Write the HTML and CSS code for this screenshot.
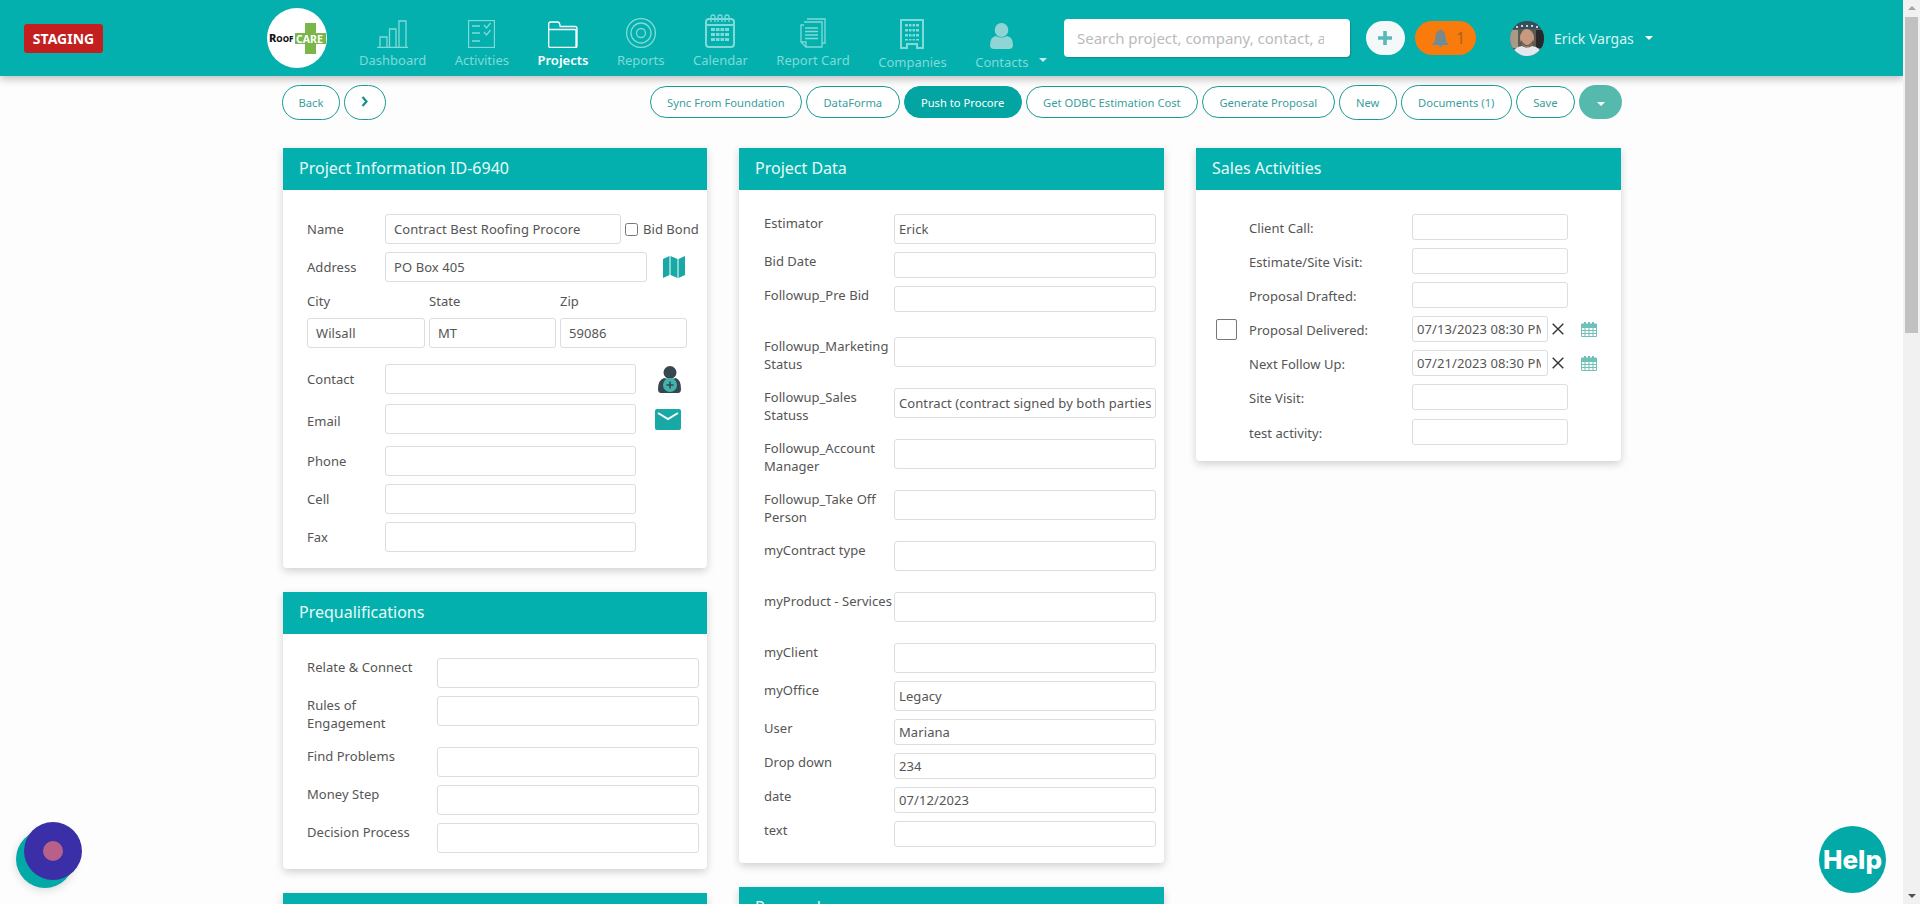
FILE: index.html
```html
<!DOCTYPE html>
<html lang="en">
<head>
    <meta charset="UTF-8">
    <title>Project Information</title>
    <link rel="stylesheet" href="styles.css">
</head>
<body>
<div class="app">
    <div class="page">
        <header class="topbar">
            <span class="staging">STAGING</span>
            <a class="logo">
                <svg width="60" height="60" viewBox="0 0 60 60">
                    <circle cx="30" cy="30" r="30" fill="#fff"/>
                    <path d="M38 15h11v10h10v11H49v10H38V36H28V25h10z" fill="#7ab648"/>
                    <text x="2" y="34" class="logo_roof">R<tspan class="logo_oof">OOF</tspan></text>
                    <text x="29" y="34.500" class="logo_care">CARE</text>
                </svg>
            </a>
            <nav class="nav">
                <a class="nav_item">
                    <svg width="31" height="28" viewBox="0 0 31 28" class="nav_stroke">
                        <path d="M3 27V17h7v10M12.500 27V9h6.500v18M22 27V1h7v26M0 27.500h31"/>
                    </svg>
                    <span>Dashboard</span>
                </a>
                <a class="nav_item">
                    <svg width="27" height="28" viewBox="0 0 27 28" class="nav_stroke">
                        <rect x=".5" y=".5" width="26" height="27"/>
                        <path d="M4 6h8M4 13h8M4 21h8M16 5l2.500 3 4-5M16 12l2.500 3 4-5"/>
                    </svg>
                    <span>Activities</span>
                </a>
                <a class="nav_item nav_active">
                    <svg width="30" height="27" viewBox="0 0 30 27" class="nav_stroke">
                        <path d="M.7 25V3q0-2 2-2h7q1.500 0 2 2l.5 2.500H27q2 0 2 2V25q0 1.500-1.500 1.500H2.500Q.7 26.500.7 25zM.7 8.500h26.300q1 0 1 1V26"/>
                    </svg>
                    <span>Projects</span>
                </a>
                <a class="nav_item">
                    <svg width="30" height="30" viewBox="0 0 30 30" class="nav_stroke">
                        <circle cx="15" cy="15" r="14.400"/>
                        <circle cx="15" cy="15" r="10"/>
                        <circle cx="15" cy="15" r="4.500"/>
                    </svg>
                    <span>Reports</span>
                </a>
                <a class="nav_item">
                    <svg width="30" height="34" viewBox="0 0 30 34">
                        <rect x="1" y="5" width="28" height="28" rx="3" fill="none" stroke="#7fdad8" stroke-width="2"/>
                        <path d="M1 11h28" stroke="#7fdad8" stroke-width="2"/>
                        <path d="M6 8V3q0-2 2-2t2 2v5M13 8V3q0-2 2-2t2 2v5M20 8V3q0-2 2-2t2 2v5" fill="none" stroke="#7fdad8" stroke-width="1.300"/>
                        <path d="M6 14h18v3H6zM6 19h18v3H6zM6 24h18v3H6z" fill="#7fdad8"/>
                        <path d="M10.500 14v13M15 14v13M19.500 14v13" stroke="#03b0ae"/>
                    </svg>
                    <span>Calendar</span>
                </a>
                <a class="nav_item">
                    <svg width="26" height="30" viewBox="0 0 26 30" class="nav_stroke">
                        <path d="M7 1h18v24h-3"/>
                        <path d="M4 4h18v25H6l-5-5V7h3"/>
                        <path d="M1 24h5v5M5 10h13M5 13.500h13M5 17h13M5 20.500h13"/>
                    </svg>
                    <span>Report Card</span>
                </a>
                <a class="nav_item nav_low">
                    <svg width="24" height="30" viewBox="0 0 24 30">
                        <path fill-rule="evenodd" fill="#7fdad8" d="M0 0h24v30H16v-4H8v4H0zM2 2v26h4v-4h12v4h4V2z"/>
                        <path d="M5 5h14v2.500H5zM5 10h14v2.500H5zM5 15h14v2.500H5zM5 20h14v1.500H5z" fill="#7fdad8"/>
                        <path d="M8.500 5v17M12 5v17M15.500 5v17" stroke="#03b0ae"/>
                    </svg>
                    <span>Companies</span>
                </a>
                <a class="nav_item nav_low">
                    <svg width="23" height="26" viewBox="0 0 23 26" fill="#8fd5d6">
                        <ellipse cx="11.500" cy="7" rx="6.800" ry="7"/>
                        <path d="M0 22q0-8 6-9 5.500 3 11 0 6 1 6 9 0 4-4 4H4q-4 0-4-4z"/>
                    </svg>
                    <span>Contacts</span>
                </a>
                <span class="caret nav_caret"></span>
            </nav>
            <input class="search" type="text" placeholder="Search project, company, contact, address">
            <button class="add_button">
                <svg width="14" height="14" viewBox="0 0 14 14"><path d="M5.200 0h3.600v5.200H14v3.600H8.800V14H5.200V8.800H0V5.200h5.200z" fill="#5ab8b6"/></svg>
            </button>
            <button class="bell_button">
                <svg width="17" height="18" viewBox="0 0 17 18">
                    <defs>
                        <linearGradient id="bell_fill" x1="0" y1="0" x2="0" y2="1">
                            <stop offset="0" stop-color="#8c8476"/>
                            <stop offset="1" stop-color="#5f8fa8"/>
                        </linearGradient>
                    </defs>
                    <path d="M8.500 0q1.500 0 1.500 1.500 3 1 3.500 5l.5 5q.3 2 2.500 3.500v1H.5v-1Q2.700 13.500 3 11.500l.5-5q.5-4 3.500-5Q7 0 8.500 0zM6.500 16.500h4q-.5 1.500-2 1.500t-2-1.500z" fill="url(#bell_fill)"/>
                </svg>
                <span>1</span>
            </button>
            <svg class="avatar" width="34" height="35" viewBox="0 0 34 35">
                <defs><clipPath id="avatar_clip"><ellipse cx="17" cy="17.500" rx="17" ry="17.500"/></clipPath></defs>
                <g clip-path="url(#avatar_clip)">
                    <rect width="34" height="35" fill="#5b5a52"/>
                    <rect width="34" height="8" fill="#35505c"/>
                    <path d="M6 5h2v2H6zM11 4h2v2h-2zM16 4h2v2h-2zM21 4h2v2h-2zM26 5h2v2h-2z" fill="#c9d4d8"/>
                    <rect x="0" y="9" width="8" height="18" fill="#a89a86"/>
                    <rect x="26" y="9" width="8" height="18" fill="#26282b"/>
                    <ellipse cx="17" cy="17" rx="7" ry="9" fill="#c79a7f"/>
                    <path d="M11 19q6 10 12 0v3q-6 7-12 0z" fill="#6f5a4b"/>
                    <path d="M2 35q1-9 10-10 5 3 10 0 9 1 10 10z" fill="#e4e8ee"/>
                </g>
            </svg>
            <span class="user_name">Erick Vargas</span>
            <span class="caret user_caret"></span>
        </header>

        <div class="toolbar">
            <div class="toolbar_group">
                <button class="pill pill_tall pill_back">Back</button>
                <button class="pill pill_tall pill_next">
                    <svg width="8" height="11" viewBox="0 0 8 11"><path d="M1.500 1l4 4.500-4 4.500" fill="none" stroke="#168f8d" stroke-width="2.200"/></svg>
                </button>
            </div>
            <div class="toolbar_group">
                <button class="pill">Sync From Foundation</button>
                <button class="pill">DataForma</button>
                <button class="pill pill_solid">Push to Procore</button>
                <button class="pill">Get ODBC Estimation Cost</button>
                <button class="pill">Generate Proposal</button>
                <button class="pill pill_tall">New</button>
                <button class="pill pill_tall">Documents (1)</button>
                <button class="pill">Save</button>
                <button class="pill pill_more"><span class="caret"></span></button>
            </div>
        </div>

        <main class="columns">
            <div class="column">
                <section class="card">
                    <h2 class="card_title">Project Information ID-6940</h2>
                    <div class="card_body">
                        <div class="row row_center mb8">
                            <label class="label w78">Name</label>
                            <input class="field w236" type="text" value="Contract Best Roofing Procore">
                            <input class="bid_check" type="checkbox">
                            <span class="label bid_label">Bid Bond</span>
                        </div>
                        <div class="row row_center mb10">
                            <label class="label w78">Address</label>
                            <input class="field w262" type="text" value="PO Box 405">
                            <svg class="map_icon" width="22" height="22" viewBox="0 0 22 22"><path d="M0 3l6.500-3v19L0 22zM7.500 0l7 3v19l-7-3zM15.500 3L22 0v19l-6.500 3z" fill="#18a8a5"/></svg>
                        </div>
                        <div class="city_grid">
                            <span class="label">City</span><span class="label">State</span><span class="label">Zip</span>
                            <input class="field" type="text" value="Wilsall">
                            <input class="field" type="text" value="MT">
                            <input class="field" type="text" value="59086">
                        </div>
                        <div class="row row_center mb10">
                            <label class="label w78">Contact</label>
                            <input class="field w251" type="text">
                            <svg class="person_icon" width="23" height="27" viewBox="0 0 23 27">
                                <circle cx="12" cy="6.500" r="6.500" fill="#37474f"/>
                                <path d="M0 23q0-9 6-11 6 2 12 0 5 2 5 11 0 4-3 4H3q-3 0-3-4z" fill="#37474f"/>
                                <circle cx="12" cy="19" r="7" fill="#3fb3ad"/>
                                <path d="M12 15.500v7M8.500 19h7" stroke="#37474f" stroke-width="1.500"/>
                            </svg>
                        </div>
                        <div class="row row_center mb12">
                            <label class="label w78 nudge2">Email</label>
                            <input class="field w251" type="text">
                            <svg class="mail_icon" width="26" height="21" viewBox="0 0 26 21">
                                <rect width="26" height="21" rx="2" fill="#18a8a5"/>
                                <path d="M3 4l10 6 10-6" fill="none" stroke="#fff" stroke-width="2"/>
                            </svg>
                        </div>
                        <div class="row row_center mb8">
                            <label class="label w78">Phone</label>
                            <input class="field w251" type="text">
                        </div>
                        <div class="row row_center mb8">
                            <label class="label w78">Cell</label>
                            <input class="field w251" type="text">
                        </div>
                        <div class="row row_center">
                            <label class="label w78">Fax</label>
                            <input class="field w251" type="text">
                        </div>
                    </div>
                </section>

                <section class="card">
                    <h2 class="card_title">Prequalifications</h2>
                    <div class="card_body">
                        <div class="row mb8">
                            <label class="label w130">Relate &amp; Connect</label>
                            <input class="field w262" type="text">
                        </div>
                        <div class="row row_two mb15">
                            <label class="label w130">Rules of Engagement</label>
                            <input class="field w262" type="text">
                        </div>
                        <div class="row mb8">
                            <label class="label w130">Find Problems</label>
                            <input class="field w262" type="text">
                        </div>
                        <div class="row mb8">
                            <label class="label w130">Money Step</label>
                            <input class="field w262" type="text">
                        </div>
                        <div class="row">
                            <label class="label w130">Decision Process</label>
                            <input class="field w262" type="text">
                        </div>
                    </div>
                </section>

                <section class="card">
                    <h2 class="card_title">&nbsp;</h2>
                </section>
            </div>

            <div class="column">
                <section class="card">
                    <h2 class="card_title">Project Data</h2>
                    <div class="card_body data_body">
                        <div class="row mb8">
                            <label class="label w130">Estimator</label>
                            <input class="field field_tight w262" type="text" value="Erick">
                        </div>
                        <div class="row mb8">
                            <label class="label w130">Bid Date</label>
                            <input class="field field_short field_tight w262" type="text">
                        </div>
                        <div class="row mb25">
                            <label class="label w130">Followup_Pre Bid</label>
                            <input class="field field_short field_tight w262" type="text">
                        </div>
                        <div class="row row_two mb15">
                            <label class="label w130">Followup_Marketing Status</label>
                            <input class="field field_tight w262" type="text">
                        </div>
                        <div class="row row_two mb15">
                            <label class="label w130">Followup_Sales Statuss</label>
                            <input class="field field_tight w262" type="text" value="Contract (contract signed by both parties)">
                        </div>
                        <div class="row row_two mb15">
                            <label class="label w130">Followup_Account Manager</label>
                            <input class="field field_tight w262" type="text">
                        </div>
                        <div class="row row_two mb15">
                            <label class="label w130">Followup_Take Off Person</label>
                            <input class="field field_tight w262" type="text">
                        </div>
                        <div class="row mb21">
                            <label class="label w130">myContract type</label>
                            <input class="field field_tight w262" type="text">
                        </div>
                        <div class="row mb21">
                            <label class="label w130">myProduct - Services</label>
                            <input class="field field_tight w262" type="text">
                        </div>
                        <div class="row mb8">
                            <label class="label w130">myClient</label>
                            <input class="field field_tight w262" type="text">
                        </div>
                        <div class="row mb8">
                            <label class="label w130">myOffice</label>
                            <input class="field field_tight w262" type="text" value="Legacy">
                        </div>
                        <div class="row mb8">
                            <label class="label w130">User</label>
                            <input class="field field_short field_tight w262" type="text" value="Mariana">
                        </div>
                        <div class="row mb8">
                            <label class="label w130">Drop down</label>
                            <input class="field field_short field_tight w262" type="text" value="234">
                        </div>
                        <div class="row mb8">
                            <label class="label w130">date</label>
                            <input class="field field_short field_tight w262" type="text" value="07/12/2023">
                        </div>
                        <div class="row">
                            <label class="label w130">text</label>
                            <input class="field field_short field_tight w262" type="text">
                        </div>
                    </div>
                </section>

                <section class="card">
                    <h2 class="card_title">Proposal</h2>
                </section>
            </div>

            <div class="column">
                <section class="card">
                    <h2 class="card_title">Sales Activities</h2>
                    <div class="card_body sales_body">
                        <div class="row row_center sales_row">
                            <label class="label sales_label">Client Call:</label>
                            <input class="field field_short w156" type="text">
                        </div>
                        <div class="row row_center sales_row">
                            <label class="label sales_label">Estimate/Site Visit:</label>
                            <input class="field field_short w156" type="text">
                        </div>
                        <div class="row row_center sales_row">
                            <label class="label sales_label">Proposal Drafted:</label>
                            <input class="field field_short w156" type="text">
                        </div>
                        <div class="row row_center sales_row">
                            <span class="sales_check"></span>
                            <label class="label sales_label">Proposal Delivered:</label>
                            <input class="field field_short field_date" type="text" value="07/13/2023 08:30 PM">
                            <svg class="clear_icon" width="12" height="12" viewBox="0 0 12 12"><path d="M.7.7l10.600 10.600M11.300.7L.7 11.300" stroke="#333" stroke-width="1.400"/></svg>
                            <svg class="date_icon" width="16" height="16" viewBox="0 0 16 16">
                                <path d="M.5 3h15v12.500H.5zM.5 6.500h15M.5 9.500h15M.5 12.500h15M4 6.500v9M8 6.500v9M12 6.500v9" fill="none" stroke="#6fc0b8"/>
                                <path d="M3 1h2v3H3zM7 1h2v3H7zM11 1h2v3h-2zM.5 3h15v3.500H.5z" fill="#6fc0b8"/>
                            </svg>
                        </div>
                        <div class="row row_center sales_row">
                            <label class="label sales_label">Next Follow Up:</label>
                            <input class="field field_short field_date" type="text" value="07/21/2023 08:30 PM">
                            <svg class="clear_icon" width="12" height="12" viewBox="0 0 12 12"><path d="M.7.7l10.600 10.600M11.300.7L.7 11.300" stroke="#333" stroke-width="1.400"/></svg>
                            <svg class="date_icon" width="16" height="16" viewBox="0 0 16 16">
                                <path d="M.5 3h15v12.500H.5zM.5 6.500h15M.5 9.500h15M.5 12.500h15M4 6.500v9M8 6.500v9M12 6.500v9" fill="none" stroke="#6fc0b8"/>
                                <path d="M3 1h2v3H3zM7 1h2v3H7zM11 1h2v3h-2zM.5 3h15v3.500H.5z" fill="#6fc0b8"/>
                            </svg>
                        </div>
                        <div class="row row_center sales_row sales_row_wide">
                            <label class="label sales_label">Site Visit:</label>
                            <input class="field field_short w156" type="text">
                        </div>
                        <div class="row row_center">
                            <label class="label sales_label">test activity:</label>
                            <input class="field field_short w156" type="text">
                        </div>
                    </div>
                </section>
            </div>
        </main>
    </div>

    <div class="scrollbar">
        <span class="scroll_up"></span>
        <span class="scroll_thumb"></span>
        <span class="scroll_down"></span>
    </div>
</div>

<div class="chat_bubble"><span class="chat_front"><span class="chat_dot"></span></span></div>
<a class="help_button">Help</a>
</body>
</html>
```

FILE: styles.css
```css
* {
    padding: 0;
    margin: 0;
    box-sizing: border-box;
}

html, body {
    height: 100%;
    overflow: hidden;
}

body {
    background-color: #fdfdfd;
    color: #555;
    font-family: "Noto Sans", "Open Sans", sans-serif;
    font-size: 13px;
}

input, button {
    font-family: inherit;
}

.app {
    display: flex;
    height: 904px;
}

.page {
    flex: 1;
    min-width: 0;
    overflow: hidden;
}

/* top bar */
.topbar {
    position: relative;
    z-index: 2;
    display: flex;
    align-items: center;
    height: 76px;
    padding-left: 24px;
    background-color: #03b0ae;
    box-shadow: 0 3px 8px rgba(0, 0, 0, .25);
}

.staging {
    width: 79px;
    height: 29px;
    margin-right: 164px;
    border-radius: 3px;
    background-color: #c41f1f;
    color: #fff;
    font-size: 14px;
    font-weight: 700;
    line-height: 29px;
    text-align: center;
}

.logo {
    width: 60px;
    height: 60px;
    margin-right: 32px;
}

.logo svg {
    display: block;
}

.logo_roof {
    fill: #111;
    font-size: 11px;
    font-weight: 800;
}

.logo_oof {
    font-size: 8px;
}

.logo_care {
    fill: #fff;
    font-size: 10.500px;
    font-weight: 700;
}

.nav {
    display: flex;
    gap: 28.500px;
    height: 76px;
}

.nav_item {
    display: flex;
    flex-direction: column;
    align-items: center;
    justify-content: flex-end;
    padding-bottom: 6px;
    color: #7fdad8;
    font-size: 13px;
    line-height: 19px;
}

.nav_item svg {
    margin-bottom: 3px;
}

.nav_stroke {
    fill: none;
    stroke: #7fdad8;
    stroke-width: 1.300;
}

.nav_active {
    color: #fff;
    font-weight: 600;
}

.nav_active .nav_stroke {
    stroke: #fff;
}

.nav_low {
    padding-bottom: 4px;
}

.nav_low svg {
    margin-bottom: 4px;
}

.caret {
    display: inline-block;
    width: 0;
    height: 0;
    border-top: 4px solid #fff;
    border-left: 4px solid transparent;
    border-right: 4px solid transparent;
}

.nav_caret {
    align-self: flex-end;
    margin: 0 0 14px -18px;
    border-top-color: #c6eeee;
}

.search {
    width: 286px;
    height: 38px;
    margin-left: 17px;
    padding: 0 26px 0 13px;
    border: 0;
    border-radius: 4px;
    background-color: #fff;
    box-shadow: 1px 1px 1px rgba(60, 70, 80, .35);
    font-size: 15px;
}

.search::placeholder {
    color: #bbb;
    opacity: 1;
}

.add_button {
    display: flex;
    align-items: center;
    justify-content: center;
    width: 39px;
    height: 34px;
    margin-left: 16px;
    border: 0;
    border-radius: 17px;
    background-color: #f4f8f9;
}

.bell_button {
    display: flex;
    align-items: center;
    width: 61px;
    height: 34px;
    margin-left: 10px;
    padding-left: 17px;
    border: 0;
    border-radius: 17px;
    background-color: #f97b0c;
    color: #a5651f;
    font-size: 16px;
}

.bell_button span {
    margin-left: 7px;
}

.avatar {
    margin-left: 34px;
}

.user_name {
    margin-left: 10px;
    color: #d8f5f4;
    font-size: 14px;
}

.user_caret {
    margin-left: 11px;
}

/* action buttons */
.toolbar {
    display: flex;
    justify-content: space-between;
    align-items: center;
    width: 1340px;
    height: 36px;
    margin: 8px 0 0 282px;
}

.toolbar_group {
    display: flex;
    align-items: center;
    gap: 4px;
}

.pill {
    height: 32px;
    padding: 0 16.400px;
    border: 1px solid #1a9997;
    border-radius: 18px;
    background-color: #fff;
    color: #3a9e9c;
    font-size: 11.200px;
    white-space: nowrap;
}

.pill_tall {
    height: 35px;
}

.pill_back {
    width: 58px;
    padding: 0;
}

.pill_next {
    width: 42px;
    padding: 0;
}

.pill_solid {
    border-color: #03a5a3;
    background-color: #03a5a3;
    color: #fff;
}

.pill_more {
    width: 43px;
    height: 34px;
    padding: 0 0 2px;
    border: 0;
    background-color: #55b9ad;
}

/* cards */
.columns {
    display: grid;
    grid-template-columns: 424px 425px 425px;
    gap: 32px;
    margin: 28px 0 0 283px;
}

.column {
    display: flex;
    flex-direction: column;
    gap: 24px;
}

.card {
    border-radius: 0 0 4px 4px;
    background-color: #fff;
    box-shadow: 0 3px 9px rgba(0, 0, 0, .18);
}

.card_title {
    height: 42px;
    padding-left: 16px;
    background-color: #03b0ae;
    color: #e8fbfa;
    font-size: 16px;
    font-weight: 400;
    line-height: 41px;
}

.card_body {
    padding: 24px 0 16px 24px;
}

.data_body {
    padding-left: 25px;
}

.sales_body {
    position: relative;
    padding-left: 53px;
}

/* form rows */
.row {
    display: flex;
    align-items: flex-start;
}

.row_center {
    align-items: center;
}

.row_two {
    height: 36px;
}

.mb8 { margin-bottom: 8px; }
.mb10 { margin-bottom: 10px; }
.mb12 { margin-bottom: 12px; }
.mb15 { margin-bottom: 15px; }
.mb21 { margin-bottom: 21px; }
.mb25 { margin-bottom: 25px; }

.label {
    color: #555;
    font-size: 13px;
    letter-spacing: .04px;
    line-height: 18px;
}

.w78 { width: 78px; flex: none; }
.w130 { width: 130px; flex: none; }
.w156 { width: 156px; }
.w236 { width: 236px; }
.w251 { width: 251px; }
.w262 { width: 262px; }

.nudge2 {
    position: relative;
    top: 2px;
}

.field {
    flex: none;
    height: 30px;
    padding: 0 8px;
    border: 1px solid #ddd;
    border-radius: 3px;
    background-color: #fff;
    color: #555;
    font-size: 13px;
    letter-spacing: .08px;
    outline: 0;
}

.field_short {
    height: 26px;
}

.field_tight {
    padding: 0 4px;
}

.bid_check {
    width: 13px;
    height: 13px;
    margin: 0 5px 0 4px;
}

.bid_label {
    white-space: nowrap;
}

.map_icon {
    margin-left: 16px;
}

.city_grid {
    display: grid;
    grid-template-columns: 118px 127px 127px;
    column-gap: 4px;
    row-gap: 8px;
    margin-bottom: 16px;
}

.person_icon {
    margin-left: 22px;
}

.mail_icon {
    margin-left: 19px;
}

/* sales activities */
.sales_row {
    margin-bottom: 8px;
}

.sales_row_wide {
    margin-bottom: 9px;
}

.sales_label {
    width: 163px;
    flex: none;
    padding-top: 1px;
}

.sales_check {
    position: absolute;
    left: 20px;
    width: 21px;
    height: 21px;
    border: 1px solid #777;
    border-radius: 2px;
    background-color: #fff;
}

.field_date {
    width: 136px;
    padding: 0 6px 0 4px;
}

.clear_icon {
    margin-left: 4px;
}

.date_icon {
    margin-left: 17px;
}

/* scrollbar */
.scrollbar {
    display: flex;
    flex-direction: column;
    align-items: center;
    width: 17px;
    background-color: #f1f1f1;
}

.scroll_up,
.scroll_down {
    flex: none;
    width: 0;
    height: 0;
    border-left: 4px solid transparent;
    border-right: 4px solid transparent;
}

.scroll_up {
    margin: 6px 0 7px;
    border-bottom: 4px solid #a3a3a3;
}

.scroll_thumb {
    width: 13px;
    height: 316px;
    background-color: #c1c1c1;
}

.scroll_down {
    margin-top: auto;
    margin-bottom: 6px;
    border-top: 4px solid #505050;
}

/* floating buttons */
.chat_bubble {
    position: absolute;
    left: 16px;
    top: 830px;
    width: 58px;
    height: 58px;
    border-radius: 50%;
    background-color: #03a9a6;
    box-shadow: 0 2px 10px rgba(0, 0, 0, .15);
}

.chat_front {
    position: absolute;
    left: 8px;
    top: -8px;
    display: flex;
    align-items: center;
    justify-content: center;
    width: 58px;
    height: 58px;
    border-radius: 50%;
    background-color: #3a2fa6;
}

.chat_dot {
    width: 20px;
    height: 20px;
    border-radius: 50%;
    background-color: #b85f8a;
}

.help_button {
    position: absolute;
    left: 1819px;
    top: 826px;
    width: 67px;
    height: 67px;
    border-radius: 50%;
    background-color: #03a9a6;
    color: #fff;
    font-family: "Inter", "Open Sans", sans-serif;
    font-size: 26px;
    font-weight: 800;
    line-height: 67px;
    text-align: center;
}
```
